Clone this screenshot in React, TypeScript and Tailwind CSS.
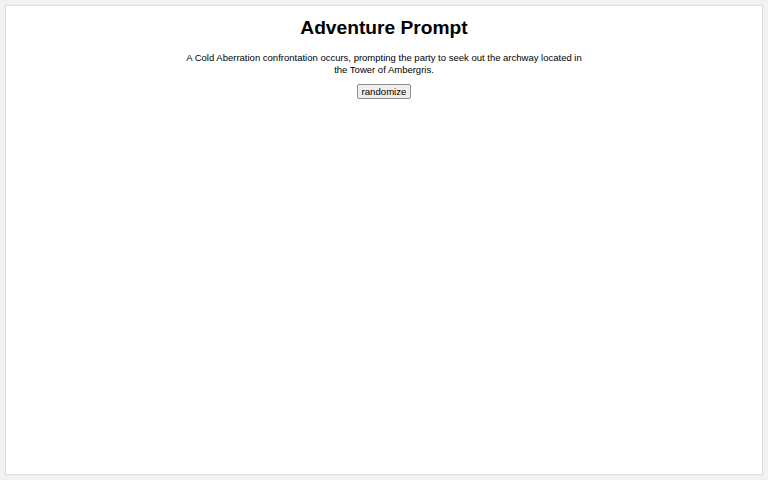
const prompt =
	"A Cold Aberration confrontation occurs, prompting the party to seek out the archway located in the Tower of Ambergris.";

const App = () => {
	return (
		<div className="h-[480px] w-[768px] bg-[#f2f2f2] p-[5px] font-['Liberation_Sans',Arial,sans-serif] text-black">
			<div className="flex h-full flex-col items-center border border-[#dcdcdc] bg-white">
				{/* TITULO */}
				<h2 className="mt-[11px] text-[19.2px] leading-[22px] font-bold">Adventure Prompt</h2>

				{/* PROMPT */}
				<p className="mt-[13px] w-[402px] text-center text-[9.5px] leading-[12px]">{prompt}</p>

				<button
					type="button"
					className="mt-[8px] rounded-[2px] border border-[#8f8f8f] bg-[#efefef] px-[4px] py-[1px] text-[9.6px] leading-[11px] hover:bg-[#e5e5e5]">
					randomize
				</button>
			</div>
		</div>
	);
};

export default App;
